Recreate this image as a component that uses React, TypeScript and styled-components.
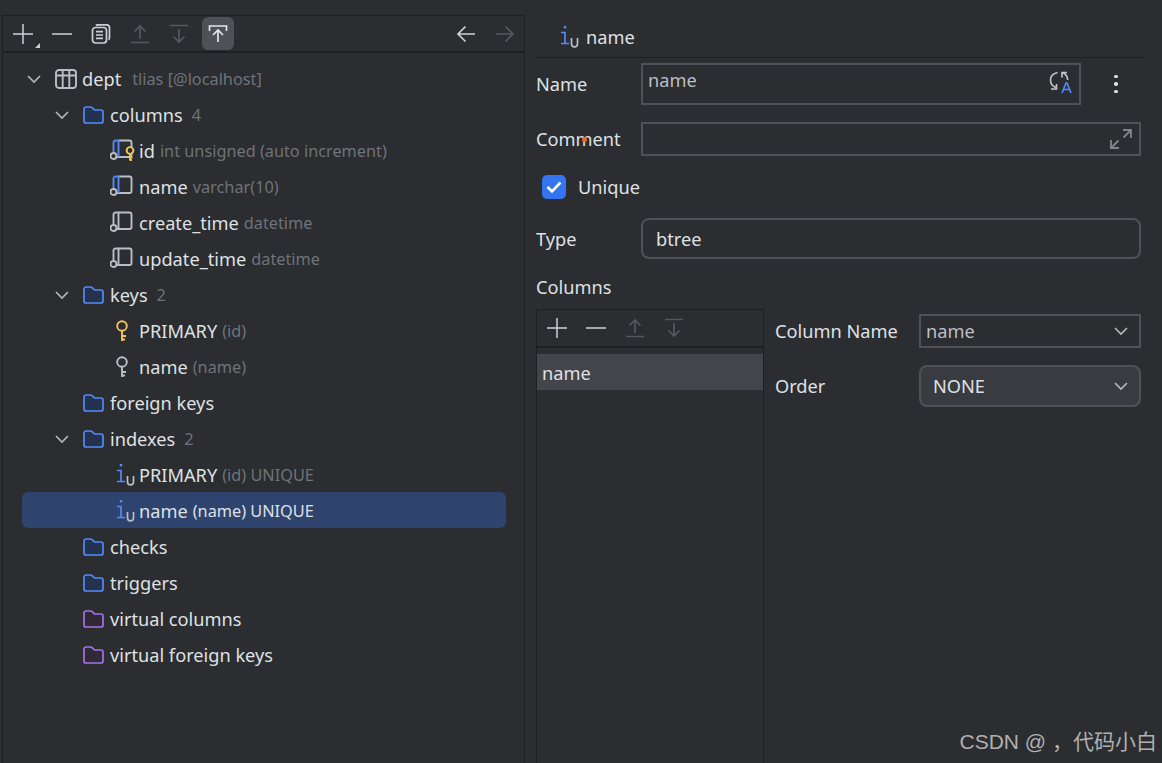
import React, { ReactNode } from 'react';
import styled, { createGlobalStyle } from 'styled-components';

const palette = {
  bg: '#2b2d30',
  line: '#1e1f22',
  text: '#dfe1e5',
  muted: '#6f737a',
  field: '#4e5157',
  icon: '#ced0d6',
  disabled: '#55585e',
  blue: '#548af7',
  gold: '#f2c55c',
  selected: '#2e436e',
  rowGrey: '#43454a',
};

const GlobalStyle = createGlobalStyle`
  html, body {
    background: ${palette.bg};
    margin: 0;
    overflow: hidden;
  }
  body {
    color: ${palette.text};
    font-family: "Noto Sans", "Noto Sans CJK SC", sans-serif;
    font-size: 18.2px;
  }
`;

/* ---------- icons ---------- */

type SvgProps = { w: number; h: number; color?: string; weight?: number; children: ReactNode };

const Svg: React.FC<SvgProps> = ({ w, h, color, weight, children }) => (
  <svg
    width={w}
    height={h}
    viewBox={`0 0 ${w} ${h}`}
    fill="none"
    stroke={color ?? palette.icon}
    strokeWidth={weight ?? 1.5}
  >
    {children}
  </svg>
);

const PlusIcon = () => (
  <Svg w={20} h={20}>
    <path d="M10 0V20M0 10H20" />
  </Svg>
);
const MinusIcon = () => (
  <Svg w={20} h={20}>
    <path d="M0 10H20" />
  </Svg>
);
const CopyIcon = () => (
  <Svg w={20} h={20} weight={1.7}>
    <path d="M5 1.6C5.5 1 6 .8 7 .8H15.5C17.5 .8 18.5 1.8 18.5 3.8V13.5C18.5 14.5 18.2 15.2 17.5 15.7" />
    <rect x="1.5" y="3.5" width="14" height="15.5" rx="3" />
    <path d="M5 7.7H12M5 11H12M5 14.3H12" />
  </Svg>
);
const UpIcon = ({ color }: { color?: string }) => (
  <Svg w={20} h={20} color={color} weight={1.7}>
    <path d="M1 18.5H19M10 15V2M4.5 7.5L10 2L15.5 7.5" />
  </Svg>
);
const DownIcon = ({ color }: { color?: string }) => (
  <Svg w={20} h={20} color={color} weight={1.7}>
    <path d="M1 1.5H19M10 5V18M4.5 12.5L10 18L15.5 12.5" />
  </Svg>
);
const ToTopIcon = () => (
  <Svg w={20} h={20} color="#e4e5e8" weight={1.7}>
    <path d="M1.5 7V2H18.5V7M10 18V6.5M5 11L10 6L15 11" />
  </Svg>
);
const BackIcon = ({ color }: { color?: string }) => (
  <Svg w={20} h={20} color={color} weight={1.7}>
    <path d="M19 10H2M9.5 2.5L2 10L9.5 17.5" />
  </Svg>
);
const ForwardIcon = ({ color }: { color?: string }) => (
  <Svg w={20} h={20} color={color} weight={1.7}>
    <path d="M1 10H18M10.5 2.5L18 10L10.5 17.5" />
  </Svg>
);
const Chevron = () => (
  <Svg w={16} h={10} color="#b4b8bf" weight={1.6}>
    <path d="M2 2L8 8L14 2" />
  </Svg>
);
const TableIcon = () => (
  <Svg w={22} h={20} weight={1.9} color="#bcbec4">
    <rect x="1" y="1" width="20" height="18" rx="3" />
    <path d="M1 6.5H21M7.7 1V19M14.3 1V19" />
  </Svg>
);
const FolderIcon = ({ virtual }: { virtual?: boolean }) => {
  const stroke = virtual ? '#a571e6' : palette.blue;
  return (
    <svg width={21} height={18} viewBox="0 0 21 18" fill={virtual ? '#2f2936' : '#25324d'} stroke={stroke} strokeWidth="1.7">
      <path d="M1 3.2C1 1.9 1.9 1 3.2 1H7.6C8.2 1 8.7 1.2 9.1 1.6L11.6 4H18C19.2 4 20 4.8 20 6V15C20 16.2 19.2 17 18 17H3C1.8 17 1 16.2 1 15Z" />
    </svg>
  );
};
const ColumnIcon = ({ primary, indexed }: { primary?: boolean; indexed?: boolean }) => (
  <Svg w={27} h={24} weight={1.9} color="#bcbec4">
    <path d="M9 1.5H19.5C20.7 1.5 21.5 2.3 21.5 3.5V16C21.5 17.2 20.7 18 19.5 18H7" />
    <path d="M3.5 14V3.5C3.5 2.3 4.3 1.5 5.5 1.5H8.5V18" stroke={indexed ? palette.blue : '#bcbec4'} />
    <circle cx="3.5" cy="17" r="3" fill={palette.bg} />
    {primary && (
      <g stroke={palette.gold} fill={palette.bg}>
        <circle cx="20" cy="11.5" r="3.4" />
        <path d="M20 15V21.5M20 18.5H22.5M20 21H22" />
      </g>
    )}
  </Svg>
);
const KeyIcon = ({ color }: { color: string }) => (
  <Svg w={14} h={22} color={color} weight={1.9}>
    <circle cx="7" cy="6" r="4.8" />
    <path d="M7 10.8V21M7 16H11M7 19.5H10" />
  </Svg>
);
const IndexIcon = () => (
  <Svg w={20} h={24} weight={1.7} color="#bcbec4">
    <path d="M5 1V3.5" stroke={palette.blue} strokeWidth="2.4" />
    <path d="M1 7.5H5V18.5M1 18.5H9" stroke={palette.blue} />
    <path d="M11.5 13V19C11.5 20.8 12.5 21.8 14.5 21.8C16.5 21.8 17.5 20.8 17.5 19V13" />
  </Svg>
);
const TranslateIcon = () => (
  <Svg w={23} h={23} color="#c4c6cb" weight={1.6}>
    <path d="M8.5 1.5C4 2.5 1.5 5 1.5 9C1.5 12.5 3.5 15.5 7 16.5M2 18H7.5V13" />
    <path d="M13 1.5C16 2.5 18.5 5 18.7 9M13 6.5V1.5H18" />
    <path d="M13 22L17 12H18L22 22M14.5 18.5H20.5" stroke={palette.blue} strokeWidth="1.7" />
  </Svg>
);
const ExpandIcon = () => (
  <Svg w={22} h={20} color="#7f8288" weight={1.9}>
    <path d="M13 1H21V9M21 1L13.5 8.5M1 11V19H9M1 19L8.5 11.5" />
  </Svg>
);
const CheckMark = () => (
  <Svg w={16} h={14} color="#ffffff" weight={2.6}>
    <path d="M1.5 7L6 11.5L14.5 2.5" />
  </Svg>
);

/* ---------- left tree ---------- */

const Page = styled.div`
  box-sizing: border-box;
  display: flex;
  height: 763px;
  padding-left: 2px;
  position: relative;
  width: 1162px;
`;

const TreePanel = styled.section`
  border: 1px solid ${palette.line};
  border-bottom: 0;
  box-sizing: border-box;
  display: flex;
  flex-direction: column;
  flex-shrink: 0;
  margin-top: 15px;
  width: 523px;
`;

const Toolbar = styled.div<{ $pad: number; $height: number }>`
  align-items: center;
  border-bottom: 2px solid ${palette.line};
  display: flex;
  flex-shrink: 0;
  gap: 7px;
  height: ${(p) => p.$height}px;
  padding: 0 3px 0 ${(p) => p.$pad}px;
`;

const ToolButton = styled.div<{ $active?: boolean }>`
  align-items: center;
  background: ${(p) => (p.$active ? palette.field : 'transparent')};
  border-radius: 6px;
  display: flex;
  height: 33px;
  justify-content: center;
  position: relative;
  width: 32px;
`;

const Corner = styled.span`
  border-bottom: 5px solid ${palette.icon};
  border-left: 5px solid transparent;
  bottom: 2px;
  position: absolute;
  right: -1px;
`;

const Spacer = styled.div`
  flex: 1;
`;

const Tree = styled.div`
  padding-top: 7px;
`;

const Row = styled.div<{ $depth: number; $selected?: boolean }>`
  align-items: center;
  background: ${(p) => (p.$selected ? palette.selected : 'transparent')};
  border-radius: 6px;
  box-sizing: border-box;
  display: flex;
  height: 36px;
  margin: 0 18px 0 19px;
  padding-left: ${(p) => 4 + p.$depth * 28}px;
  padding-top: 2px;
  white-space: nowrap;
`;

const ChevronSlot = styled.span`
  display: flex;
  flex-shrink: 0;
  width: 28px;
`;

const IconSlot = styled.span<{ $offset?: number; $width: number }>`
  box-sizing: border-box;
  display: flex;
  flex-shrink: 0;
  padding-left: ${(p) => p.$offset ?? 0}px;
  width: ${(p) => p.$width}px;
`;

const Name = styled.span`
  color: ${palette.text};
`;

const Hint = styled.span<{ $bright?: boolean }>`
  color: ${(p) => (p.$bright ? palette.text : palette.muted)};
  font-size: 16.3px;
  margin-left: 5px;
`;

const Detail = styled.span<{ $gap: number }>`
  color: ${palette.muted};
  font-size: 16.3px;
  margin-left: ${(p) => p.$gap}px;
`;

type TreeRowProps = {
  depth: number;
  open?: boolean;
  icon: ReactNode;
  offset?: number;
  name: string;
  selected?: boolean;
  children?: ReactNode;
};

const TreeRow: React.FC<TreeRowProps> = ({ depth, open, icon, offset, name, selected, children }) => (
  <Row $depth={depth} $selected={selected}>
    <ChevronSlot>{open && <Chevron />}</ChevronSlot>
    <IconSlot $offset={offset} $width={depth === 2 ? 29 : 28}>
      {icon}
    </IconSlot>
    <Name>{name}</Name>
    {children}
  </Row>
);

/* ---------- right form ---------- */

const EditorPanel = styled.section`
  display: flex;
  flex-direction: column;
  flex-shrink: 0;
  margin-left: 11px;
  width: 608px;
`;

const TabHeader = styled.header`
  align-items: center;
  border-bottom: 1px solid ${palette.line};
  box-sizing: border-box;
  display: flex;
  flex-shrink: 0;
  gap: 6px;
  height: 58px;
  padding: 16px 0 0 24px;
`;

const FormRow = styled.div<{ $top: number; $height: number }>`
  align-items: center;
  display: flex;
  flex-shrink: 0;
  height: ${(p) => p.$height}px;
  margin-top: ${(p) => p.$top}px;
  padding-right: 3px;
`;

const Label = styled.label<{ $width?: number }>`
  color: ${palette.text};
  flex-shrink: 0;
  position: relative;
  width: ${(p) => p.$width ?? 105}px;
`;

const OrangeDot = styled.i`
  background: #f26522;
  border-radius: 50%;
  height: 5px;
  left: 46px;
  position: absolute;
  top: 10px;
  width: 5px;
`;

const Field = styled.div<{ $round?: boolean; $fill?: string; $pad?: number; $muted?: boolean }>`
  align-items: center;
  background: ${(p) => p.$fill ?? 'transparent'};
  border: 2px solid ${palette.field};
  border-radius: ${(p) => (p.$round ? 8 : 0)}px;
  box-sizing: border-box;
  color: ${(p) => (p.$muted ? '#bcbec4' : palette.text)};
  display: flex;
  flex: 1;
  height: 100%;
  justify-content: space-between;
  min-width: 0;
  padding: 0 14px 0 ${(p) => p.$pad ?? 5}px;
`;

const NameText = styled.span`
  margin-top: -8px;
`;

const TranslateSlot = styled.span`
  display: flex;
  margin: -3px -7px 0 0;
`;

const ExpandSlot = styled.span`
  display: flex;
  margin-right: -7px;
`;

const ChevronEnd = styled.span`
  display: flex;
  margin-right: -4px;
`;

const MoreButton = styled.div`
  align-items: center;
  display: flex;
  flex-direction: column;
  flex-shrink: 0;
  gap: 4px;
  margin: 0 13px 0 23px;
  width: 24px;

  i {
    background: #dfe1e5;
    border-radius: 50%;
    height: 3.5px;
    width: 3.5px;
  }
`;

const CheckBox = styled.span`
  align-items: center;
  background: #3574f0;
  border-radius: 5px;
  display: flex;
  height: 24px;
  justify-content: center;
  margin: 0 12px 0 6px;
  width: 24px;
`;

const SectionTitle = styled.div`
  line-height: 24px;
  margin-top: 16px;
`;

const ColumnsArea = styled.div`
  display: flex;
  flex: 1;
  margin-top: 10px;
  min-height: 0;
`;

const ColumnsList = styled.div`
  border: 1px solid ${palette.line};
  border-bottom: 0;
  box-sizing: border-box;
  flex-shrink: 0;
  width: 228px;
`;

const ListItem = styled.div`
  align-items: center;
  background: ${palette.rowGrey};
  box-sizing: border-box;
  display: flex;
  height: 36px;
  margin-top: 6px;
  padding: 2px 0 0 5px;
`;

const ColumnForm = styled.div`
  display: flex;
  flex: 1;
  flex-direction: column;
  padding-left: 11px;
`;

const Watermark = styled.div`
  color: #b0b0b0;
  font-family: "Liberation Sans", "Noto Sans CJK SC", sans-serif;
  font-size: 21px;
  line-height: 30px;
  position: absolute;
  right: 5px;
  top: 727px;
  white-space: nowrap;
`;

const App: React.FC = () => {
  return (
    <Page>
      <GlobalStyle />
      <TreePanel>
        <Toolbar $pad={4} $height={35}>
          <ToolButton>
            <PlusIcon />
            <Corner />
          </ToolButton>
          <ToolButton>
            <MinusIcon />
          </ToolButton>
          <ToolButton>
            <CopyIcon />
          </ToolButton>
          <ToolButton>
            <UpIcon color={palette.disabled} />
          </ToolButton>
          <ToolButton>
            <DownIcon color={palette.disabled} />
          </ToolButton>
          <ToolButton $active>
            <ToTopIcon />
          </ToolButton>
          <Spacer />
          <ToolButton>
            <BackIcon />
          </ToolButton>
          <ToolButton>
            <ForwardIcon color={palette.disabled} />
          </ToolButton>
        </Toolbar>
        <Tree>
          <TreeRow depth={0} open offset={1} icon={<TableIcon />} name="dept">
            <Detail $gap={11}>tlias [@localhost]</Detail>
          </TreeRow>
          <TreeRow depth={1} open offset={1} icon={<FolderIcon />} name="columns">
            <Detail $gap={9}>4</Detail>
          </TreeRow>
          <TreeRow depth={2} icon={<ColumnIcon primary indexed />} name="id">
            <Hint>int unsigned (auto increment)</Hint>
          </TreeRow>
          <TreeRow depth={2} icon={<ColumnIcon indexed />} name="name">
            <Hint>varchar(10)</Hint>
          </TreeRow>
          <TreeRow depth={2} icon={<ColumnIcon />} name="create_time">
            <Hint>datetime</Hint>
          </TreeRow>
          <TreeRow depth={2} icon={<ColumnIcon />} name="update_time">
            <Hint>datetime</Hint>
          </TreeRow>
          <TreeRow depth={1} open offset={1} icon={<FolderIcon />} name="keys">
            <Detail $gap={9}>2</Detail>
          </TreeRow>
          <TreeRow depth={2} offset={5} icon={<KeyIcon color={palette.gold} />} name="PRIMARY">
            <Hint>(id)</Hint>
          </TreeRow>
          <TreeRow depth={2} offset={5} icon={<KeyIcon color="#bcbec4" />} name="name">
            <Hint>(name)</Hint>
          </TreeRow>
          <TreeRow depth={1} offset={1} icon={<FolderIcon />} name="foreign keys" />
          <TreeRow depth={1} open offset={1} icon={<FolderIcon />} name="indexes">
            <Detail $gap={9}>2</Detail>
          </TreeRow>
          <TreeRow depth={2} offset={6} icon={<IndexIcon />} name="PRIMARY">
            <Hint>(id) UNIQUE</Hint>
          </TreeRow>
          <TreeRow depth={2} offset={6} icon={<IndexIcon />} name="name" selected>
            <Hint $bright>(name) UNIQUE</Hint>
          </TreeRow>
          <TreeRow depth={1} offset={1} icon={<FolderIcon />} name="checks" />
          <TreeRow depth={1} offset={1} icon={<FolderIcon />} name="triggers" />
          <TreeRow depth={1} offset={1} icon={<FolderIcon virtual />} name="virtual columns" />
          <TreeRow depth={1} offset={1} icon={<FolderIcon virtual />} name="virtual foreign keys" />
        </Tree>
      </TreePanel>

      <EditorPanel>
        <TabHeader>
          <IndexIcon />
          <Name>name</Name>
        </TabHeader>
        <FormRow $top={5} $height={42}>
          <Label>Name</Label>
          <Field $muted>
            <NameText>name</NameText>
            <TranslateSlot>
              <TranslateIcon />
            </TranslateSlot>
          </Field>
          <MoreButton>
            <i />
            <i />
            <i />
          </MoreButton>
        </FormRow>
        <FormRow $top={17} $height={34}>
          <Label>
            Comment
            <OrangeDot />
          </Label>
          <Field>
            <span />
            <ExpandSlot>
              <ExpandIcon />
            </ExpandSlot>
          </Field>
        </FormRow>
        <FormRow $top={19} $height={24}>
          <CheckBox>
            <CheckMark />
          </CheckBox>
          <Name>Unique</Name>
        </FormRow>
        <FormRow $top={19} $height={41}>
          <Label>Type</Label>
          <Field $round $pad={13}>
            btree
          </Field>
        </FormRow>
        <SectionTitle>Columns</SectionTitle>
        <ColumnsArea>
          <ColumnsList>
            <Toolbar $pad={4} $height={36}>
              <ToolButton>
                <PlusIcon />
              </ToolButton>
              <ToolButton>
                <MinusIcon />
              </ToolButton>
              <ToolButton>
                <UpIcon color={palette.disabled} />
              </ToolButton>
              <ToolButton>
                <DownIcon color={palette.disabled} />
              </ToolButton>
            </Toolbar>
            <ListItem>name</ListItem>
          </ColumnsList>
          <ColumnForm>
            <FormRow $top={5} $height={34}>
              <Label $width={144}>Column Name</Label>
              <Field $muted>
                name
                <ChevronEnd>
                  <Chevron />
                </ChevronEnd>
              </Field>
            </FormRow>
            <FormRow $top={17} $height={42}>
              <Label $width={144}>Order</Label>
              <Field $round $fill="#393b40" $pad={12}>
                NONE
                <ChevronEnd>
                  <Chevron />
                </ChevronEnd>
              </Field>
            </FormRow>
          </ColumnForm>
        </ColumnsArea>
      </EditorPanel>
      <Watermark>CSDN @ ，代码小白</Watermark>
    </Page>
  );
};

export default App;
